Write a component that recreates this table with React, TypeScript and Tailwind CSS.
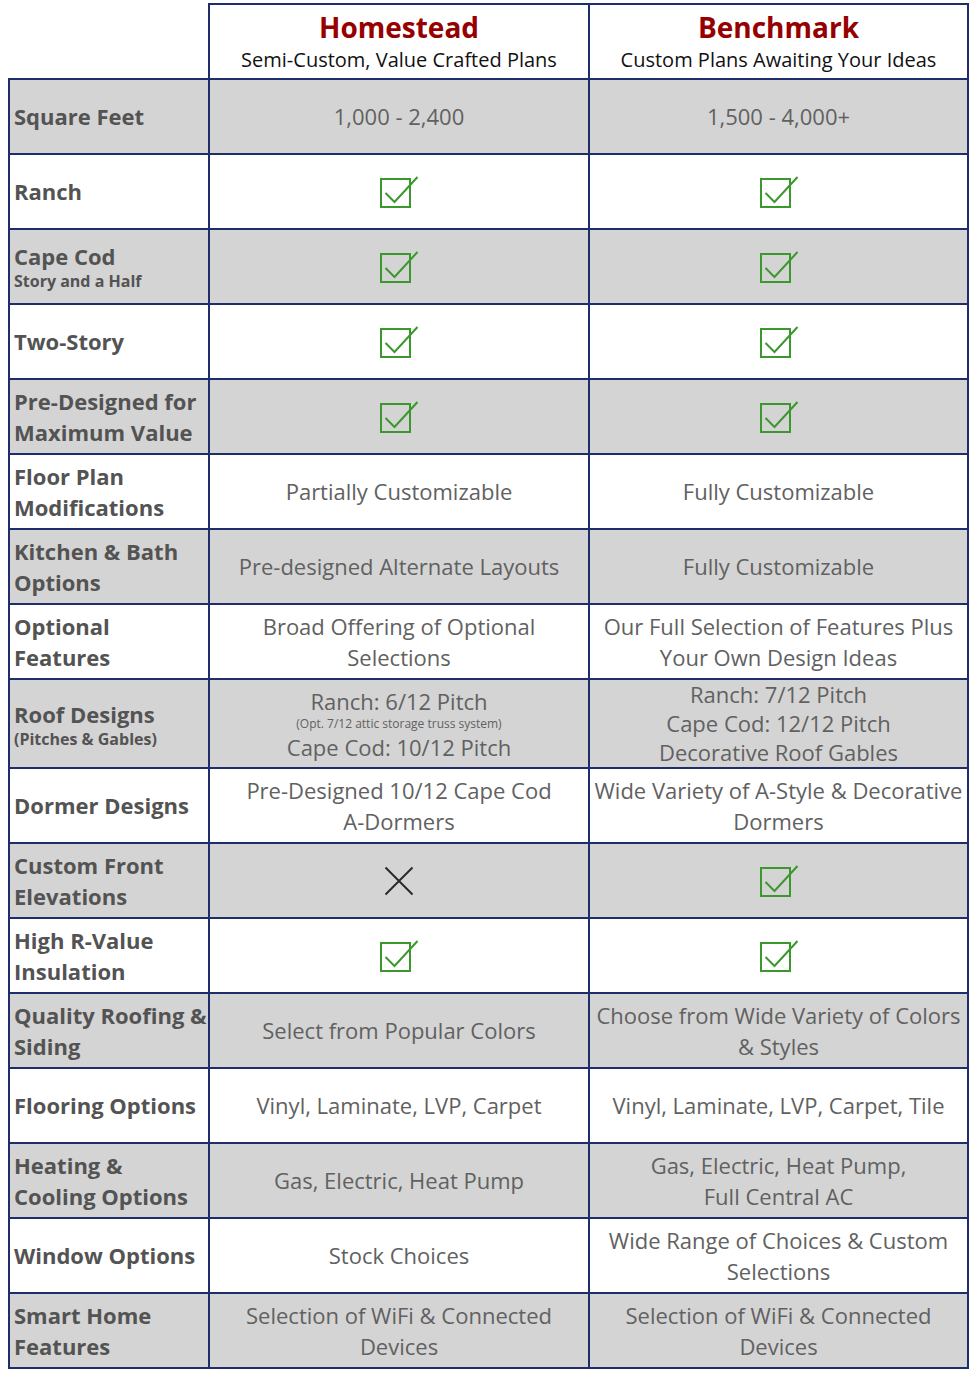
import React from "react";

const Check = () => (
  <svg width="40" height="34" viewBox="0 0 40 34" className="mx-auto block">
    <rect x="2" y="4" width="29" height="28" fill="none" stroke="#3b982c" strokeWidth="2" />
    <path d="M6.5 18 L15.5 27 L38.5 2" fill="none" stroke="#3b982c" strokeWidth="2" />
  </svg>
);

const Cross = () => (
  <svg width="30" height="30" viewBox="0 0 30 30" className="mx-auto block">
    <path d="M1.5 1.5 L28.5 28.5 M28.5 1.5 L1.5 28.5" fill="none" stroke="#2a2a2a" strokeWidth="2" />
  </svg>
);

type Cell = React.ReactNode;
type Row = { label: React.ReactNode; a: Cell; b: Cell; h?: string };

const L = ({ lines }: { lines: string[] }) => (
  <>
    {lines.map((l, i) => (
      <div key={i} className="whitespace-nowrap">
        {l}
      </div>
    ))}
  </>
);

const rows: Row[] = [
  { label: <L lines={["Square Feet"]} />, a: "1,000 - 2,400", b: "1,500 - 4,000+" },
  { label: <L lines={["Ranch"]} />, a: <Check />, b: <Check /> },
  {
    label: (
      <>
        <div className="leading-[28px]">Cape Cod</div>
        <div className="text-[16px] leading-[22px]">Story and a Half</div>
      </>
    ),
    a: <Check />,
    b: <Check />,
  },
  { label: <L lines={["Two-Story"]} />, a: <Check />, b: <Check /> },
  { label: <L lines={["Pre-Designed for", "Maximum Value"]} />, a: <Check />, b: <Check /> },
  { label: <L lines={["Floor Plan", "Modifications"]} />, a: "Partially Customizable", b: "Fully Customizable" },
  { label: <L lines={["Kitchen & Bath", "Options"]} />, a: "Pre-designed Alternate Layouts", b: "Fully Customizable" },
  {
    label: <L lines={["Optional", "Features"]} />,
    a: <L lines={["Broad Offering of Optional", "Selections"]} />,
    b: <L lines={["Our Full Selection of Features Plus", "Your Own Design Ideas"]} />,
  },
  {
    label: (
      <>
        <div className="leading-[30px]">Roof Designs</div>
        <div className="text-[16px] leading-[20px]">(Pitches &amp; Gables)</div>
      </>
    ),
    a: (
      <>
        <div className="leading-[26px]">Ranch: 6/12 Pitch</div>
        <div className="text-[12px] leading-[20px]">(Opt. 7/12 attic storage truss system)</div>
        <div className="leading-[26px]">Cape Cod: 10/12 Pitch</div>
      </>
    ),
    b: (
      <div className="leading-[29px]">
        <div>Ranch: 7/12 Pitch</div>
        <div>Cape Cod: 12/12 Pitch</div>
        <div>Decorative Roof Gables</div>
      </div>
    ),
    h: "h-[89px]",
  },
  {
    label: <L lines={["Dormer Designs"]} />,
    a: <L lines={["Pre-Designed 10/12 Cape Cod", "A-Dormers"]} />,
    b: <L lines={["Wide Variety of A-Style & Decorative", "Dormers"]} />,
  },
  { label: <L lines={["Custom Front", "Elevations"]} />, a: <Cross />, b: <Check /> },
  { label: <L lines={["High R-Value", "Insulation"]} />, a: <Check />, b: <Check /> },
  {
    label: <L lines={["Quality Roofing &", "Siding"]} />,
    a: "Select from Popular Colors",
    b: <L lines={["Choose from Wide Variety of Colors", "& Styles"]} />,
  },
  { label: <L lines={["Flooring Options"]} />, a: "Vinyl, Laminate, LVP, Carpet", b: "Vinyl, Laminate, LVP, Carpet, Tile" },
  {
    label: <L lines={["Heating &", "Cooling Options"]} />,
    a: "Gas, Electric, Heat Pump",
    b: <L lines={["Gas, Electric, Heat Pump,", "Full Central AC"]} />,
  },
  {
    label: <L lines={["Window Options"]} />,
    a: "Stock Choices",
    b: <L lines={["Wide Range of Choices & Custom", "Selections"]} />,
  },
  {
    label: <L lines={["Smart Home", "Features"]} />,
    a: <L lines={["Selection of WiFi & Connected", "Devices"]} />,
    b: <L lines={["Selection of WiFi & Connected", "Devices"]} />,
  },
];

export default function App() {
  return (
    <div className="min-h-[1373px] bg-white pl-[8px] pt-[3px] font-['Open_Sans',sans-serif]">
      <table className="border-collapse table-fixed w-[959px]">
        <colgroup>
          <col className="w-[200px]" />
          <col className="w-[380px]" />
          <col className="w-[379px]" />
        </colgroup>
        <thead>
          <tr className="h-[75px]">
            <th className="p-0"></th>
            <th className="border-2 border-[#1f2e6b] p-0 text-center font-normal">
              <div className="text-[28px] font-bold leading-[34px] text-[#960000]">Homestead</div>
              <div className="mt-[2px] text-[20px] leading-[28px] text-[#111]">Semi-Custom, Value Crafted Plans</div>
            </th>
            <th className="border-2 border-[#1f2e6b] p-0 text-center font-normal">
              <div className="text-[28px] font-bold leading-[34px] text-[#960000]">Benchmark</div>
              <div className="mt-[2px] text-[20px] leading-[28px] text-[#111]">Custom Plans Awaiting Your Ideas</div>
            </th>
          </tr>
        </thead>
        <tbody>
          {rows.map((r, i) => {
            const bg = i % 2 === 0 ? "bg-[#d4d4d4]" : "bg-white";
            return (
              <tr key={i} className={`${r.h ?? "h-[75px]"} ${bg}`}>
                <td className="border-2 border-[#1f2e6b] pl-[4px] pr-0 py-0 text-left align-middle text-[22px] font-bold leading-[31px] text-[#535353]">
                  {r.label}
                </td>
                <td className="border-2 border-[#1f2e6b] p-0 text-center align-middle text-[22px] leading-[31px] text-[#616161]">
                  {r.a}
                </td>
                <td className="border-2 border-[#1f2e6b] p-0 text-center align-middle text-[22px] leading-[31px] text-[#616161]">
                  {r.b}
                </td>
              </tr>
            );
          })}
        </tbody>
      </table>
    </div>
  );
}
